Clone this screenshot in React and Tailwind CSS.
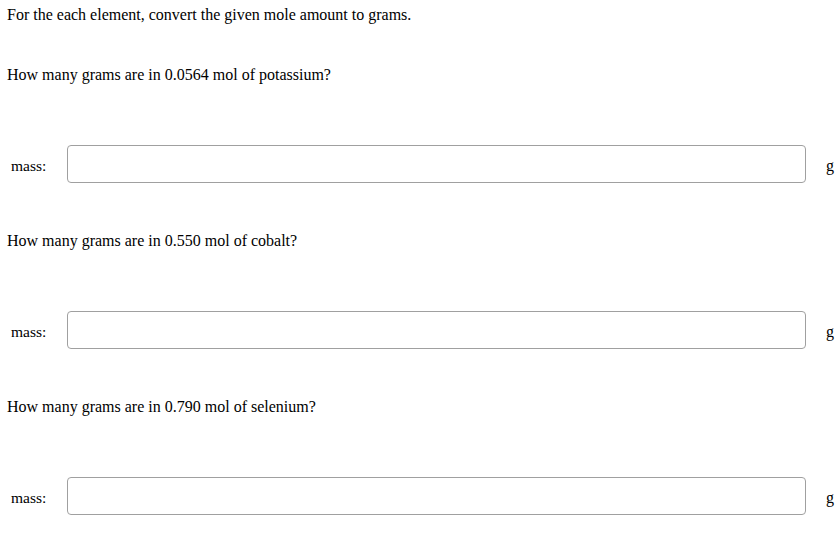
import React from 'react';

const questions = [
  { key: 'k', text: 'How many grams are in 0.0564 mol of potassium?' },
  { key: 'co', text: 'How many grams are in 0.550 mol of cobalt?' },
  { key: 'se', text: 'How many grams are in 0.790 mol of selenium?' }
];

function MassRow() {
  return (
    <div className="flex items-center h-[38px]">
      <label className="w-[67px] pl-[11px] pt-[3px] text-[15.5px]">mass:</label>
      <input
        type="text"
        className="flex-1 h-[38px] rounded-[4px] border border-[#a0a0a0] bg-white outline-none"
      />
      <span className="w-[32px] pl-[20px] pt-[4px] text-[16px]">g</span>
    </div>
  );
}

export default function App() {
  return (
    <div className="w-[838px] min-h-[543px] bg-white text-black font-['Liberation_Serif',serif] text-[16px]">
      <p className="pl-[7px] pt-[5px] leading-[20px]">For the each element, convert the given mole amount to grams.</p>
      {questions.map((q, i) => (
        <div key={q.key} className={i === 0 ? 'mt-[40px]' : 'mt-[48px]'}>
          <p className="pl-[7px] leading-[20px]">{q.text}</p>
          <div className="mt-[60px]">
            <MassRow />
          </div>
        </div>
      ))}
    </div>
  );
}
